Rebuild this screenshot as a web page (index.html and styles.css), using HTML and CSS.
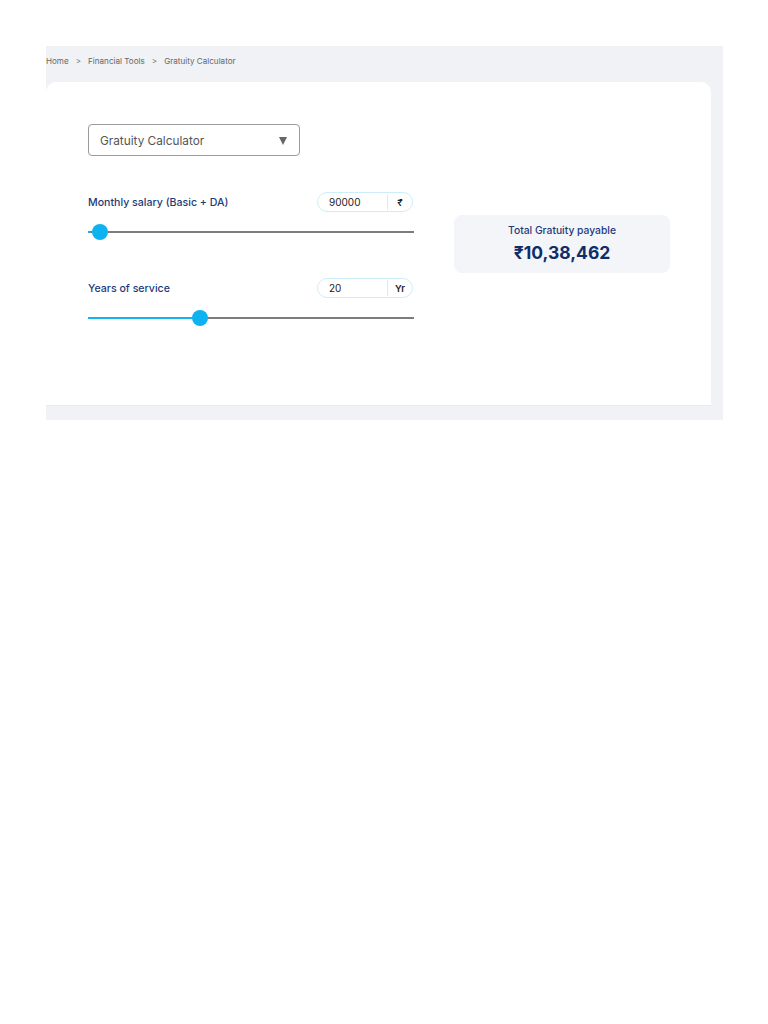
FILE: index.html
```html
<!DOCTYPE html>
<html>
<head>
<meta charset="utf-8">
<link rel="stylesheet" href="styles.css">
</head>
<body>
<div class="page">
  <div class="crumbs">
    <span>Home</span><span class="sep">&gt;</span><span>Financial Tools</span><span class="sep">&gt;</span><span>Gratuity Calculator</span>
  </div>
  <div class="card">
    <div class="left">
      <div class="select">
        <span>Gratuity Calculator</span>
        <span class="caret"></span>
      </div>
      <div class="field first">
        <div class="row">
          <span class="label">Monthly salary (Basic + DA)</span>
          <div class="pill"><span class="val">90000</span><span class="unit">₹</span></div>
        </div>
        <div class="slider">
          <div class="fill" style="width:2px"></div>
          <div class="thumb" style="left:12px"></div>
        </div>
      </div>
      <div class="field">
        <div class="row">
          <span class="label">Years of service</span>
          <div class="pill"><span class="val">20</span><span class="unit">Yr</span></div>
        </div>
        <div class="slider">
          <div class="fill" style="width:112px"></div>
          <div class="thumb" style="left:112px"></div>
        </div>
      </div>
    </div>
    <div class="result">
      <div class="rtitle">Total Gratuity payable</div>
      <div class="rvalue">₹10,38,462</div>
    </div>
  </div>
</div>
</body>
</html>
```

FILE: styles.css
```css
html, body { margin: 0; padding: 0; background: #fff; }
body { font-family: Inter, "Noto Sans", sans-serif; }
.page {
  margin: 46px 0 0 46px;
  width: 677px;
  height: 374px;
  background: #f1f2f6;
  box-sizing: border-box;
  display: flex;
  flex-direction: column;
}
.crumbs {
  height: 36px;
  display: flex;
  align-items: center;
  font-size: 8.1px;
  color: #666;
  gap: 7px;
  padding-bottom: 6px;
  box-sizing: border-box;
}
.crumbs .sep { color: #777; }
.card {
  width: 665px;
  height: 324px;
  background: #fff;
  border-radius: 10px 10px 0 0;
  box-sizing: border-box;
  padding: 42px 0 0 42px;
  display: flex;
  gap: 40px;
  border-bottom: 1px solid #ebebef;
}
.left { width: 326px; display: flex; flex-direction: column; }
.select {
  width: 212px;
  height: 32px;
  box-sizing: border-box;
  border: 1px solid #9a9a9a;
  border-radius: 4px;
  display: flex;
  align-items: center;
  justify-content: space-between;
  padding: 2px 12px 0 11px;
  font-size: 11.8px;
  color: #555;
}
.caret {
  width: 0; height: 0;
  border-left: 4.5px solid transparent;
  border-right: 4.5px solid transparent;
  border-top: 8px solid #666;
}
.field { margin-top: 45px; }
.field.first { margin-top: 36px; }
.row {
  display: flex;
  justify-content: space-between;
  align-items: center;
  height: 20px;
}
.label { font-size: 10.6px; color: #1d3a7a; font-weight: 500; }
.pill {
  width: 96px;
  height: 20px;
  box-sizing: border-box;
  border: 1px solid #cdeef8;
  border-radius: 10px;
  display: flex;
  align-items: center;
  margin-right: 1px;
}
.val {
  width: 70px;
  box-sizing: border-box;
  padding-left: 11px;
  font-size: 10px;
  color: #222;
  border-right: 1px solid #d9ecf2;
  line-height: 16px;
}
.unit { flex: 1; text-align: center; font-size: 9.5px; color: #222; font-weight: 600; }
.slider {
  position: relative;
  height: 2px;
  background: #7c7c7c;
  margin-top: 19px;
  margin-bottom: 0;
}
.fill {
  position: absolute;
  left: 0; top: 0;
  height: 2px;
  background: #12b3ef;
}
.thumb {
  position: absolute;
  top: -7px;
  width: 16px;
  height: 16px;
  margin-left: -8px;
  border-radius: 50%;
  background: #0db3f0;
}
.result {
  margin-top: 91px;
  width: 216px;
  height: 58px;
  background: #f3f5f9;
  border-radius: 8px;
  display: flex;
  flex-direction: column;
  align-items: center;
  justify-content: center;
  gap: 6px;
  padding-bottom: 2px;
  box-sizing: border-box;
}
.rtitle { font-size: 10.3px; color: #1d3a7a; font-weight: 500; }
.rvalue { font-size: 17.5px; color: #0f2d6b; font-weight: 700; }
```
